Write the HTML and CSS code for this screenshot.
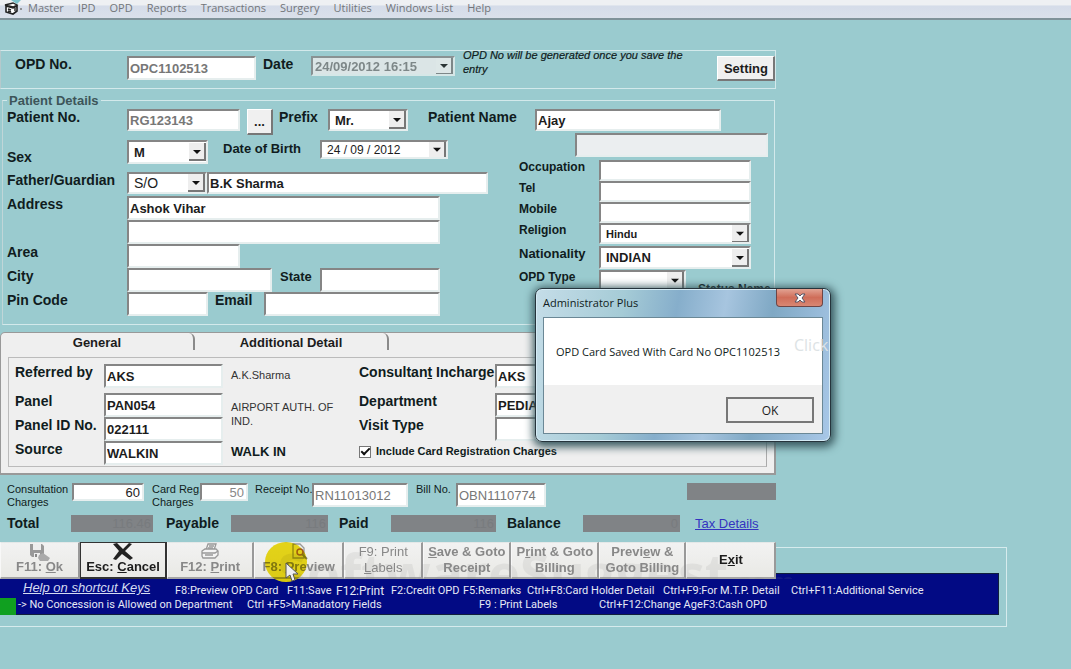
FILE: index.html
```html
<!DOCTYPE html>
<html lang="en">
<head>
    <meta charset="UTF-8">
    <meta name="viewport" content="width=device-width, initial-scale=1.0">
    <title>OPD Card</title>
    <link rel="stylesheet" href="styles.css">
</head>
<body>
    <nav class="menubar">
        <svg class="app-icon" width="18" height="16" viewBox="0 0 18 16">
            <path d="M7 0h10l-4 4z" fill="#7cc4cc"/>
            <path d="M1 5l8-2 4 2-4 2z" fill="#fff" stroke="#222" stroke-width="1.3"/>
            <path d="M2 6v6l7 2 4-3V6L9 8z" fill="#fff" stroke="#222" stroke-width="1.6"/>
            <path d="M4 9l3 1M4 11l3 1M11 8v3" fill="none" stroke="#222" stroke-width="1.4"/>
            <circle cx="17" cy="9" r="1" fill="#777"/>
        </svg>
        <a href="#">Master</a>
        <a href="#">IPD</a>
        <a href="#">OPD</a>
        <a href="#">Reports</a>
        <a href="#">Transactions</a>
        <a href="#">Surgery</a>
        <a href="#">Utilities</a>
        <a href="#">Windows List</a>
        <a href="#">Help</a>
    </nav>

    <form class="opd-form">
        <section class="card-head">
            <label for="opdNo">OPD No.</label>
            <input type="text" id="opdNo" class="muted" value="OPC1102513" readonly>
            <label for="opdDate">Date</label>
            <select id="opdDate" class="muted off" disabled><option>24/09/2012 16:15</option></select>
            <p class="note">OPD No will be generated once you save the entry</p>
            <button type="button" class="setting">Setting</button>
        </section>

        <fieldset class="patient">
            <legend>Patient Details</legend>
            <div class="row row-patient">
                <label for="patientNo">Patient No.</label>
                <input type="text" id="patientNo" class="muted" value="RG123143" readonly>
                <button type="button" class="browse">...</button>
                <label for="prefix">Prefix</label>
                <select id="prefix"><option>Mr.</option></select>
                <label for="patientName">Patient Name</label>
                <input type="text" id="patientName" value="Ajay">
            </div>
            <div class="columns">
                <div class="left">
                    <div class="row row-sex">
                        <label for="sex" class="low">Sex</label>
                        <select id="sex"><option>M</option></select>
                        <label for="dob" class="small">Date of Birth</label>
                        <select id="dob" class="dob"><option>24 / 09 / 2012</option></select>
                    </div>
                    <div class="row row-father">
                        <label for="guardian">Father/Guardian</label>
                        <select id="relation" aria-label="Relation"><option>S/O</option></select>
                        <input type="text" id="guardian" value="B.K Sharma">
                    </div>
                    <div class="row row-wide">
                        <label for="address1">Address</label>
                        <input type="text" id="address1" value="Ashok Vihar">
                    </div>
                    <div class="row row-wide">
                        <span></span>
                        <input type="text" id="address2" aria-label="Address line 2">
                    </div>
                    <div class="row row-area">
                        <label for="area">Area</label>
                        <input type="text" id="area">
                    </div>
                    <div class="row row-city">
                        <label for="city">City</label>
                        <input type="text" id="city">
                        <label for="state" class="small">State</label>
                        <input type="text" id="state">
                    </div>
                    <div class="row row-pin">
                        <label for="pin">Pin Code</label>
                        <input type="text" id="pin">
                        <label for="email">Email</label>
                        <input type="text" id="email">
                    </div>
                </div>
                <div class="right">
                    <input type="text" class="extra" aria-label="Patient remark" readonly>
                    <div class="side">
                        <label for="occupation">Occupation</label>
                        <input type="text" id="occupation">
                        <label for="tel">Tel</label>
                        <input type="text" id="tel">
                        <label for="mobile">Mobile</label>
                        <input type="text" id="mobile">
                        <label for="religion">Religion</label>
                        <select id="religion" class="tiny"><option>Hindu</option></select>
                        <label for="nationality" class="mid">Nationality</label>
                        <select id="nationality" class="tall"><option>INDIAN</option></select>
                        <label for="opdType">OPD Type</label>
                        <div class="type-row">
                            <select id="opdType"><option></option></select>
                            <span class="status">Status Name</span>
                        </div>
                    </div>
                </div>
            </div>
        </fieldset>

        <section class="tabs">
            <div class="tab-strip">
                <button type="button" class="tab">General</button>
                <button type="button" class="tab">Additional Detail</button>
            </div>
            <div class="tab-body">
                <div class="refs">
                    <label for="referredBy">Referred by</label>
                    <input type="text" id="referredBy" value="AKS">
                    <span class="desc">A.K.Sharma</span>
                    <label for="panel">Panel</label>
                    <input type="text" id="panel" value="PAN054">
                    <span class="desc desc-two">AIRPORT AUTH. OF IND.</span>
                    <label for="panelId">Panel ID No.</label>
                    <input type="text" id="panelId" value="022111">
                    <span></span>
                    <label for="source">Source</label>
                    <input type="text" id="source" value="WALKIN">
                    <span class="desc-strong">WALK IN</span>
                </div>
                <div class="consult">
                    <label for="consultant">Consultan<u>t</u> Incharge</label>
                    <input type="text" id="consultant" value="AKS">
                    <label for="department">Department</label>
                    <input type="text" id="department" value="PEDIATRICS">
                    <label for="visitType">Visit Type</label>
                    <input type="text" id="visitType">
                    <label class="check"><input type="checkbox" checked>Include Card Registration Charges</label>
                </div>
            </div>
        </section>

        <section class="charges">
            <label for="consultCharge">Consultation<br>Charges</label>
            <input type="text" id="consultCharge" class="num" value="60">
            <label for="cardCharge">Card Reg.<br>Charges</label>
            <input type="text" id="cardCharge" class="num dim" value="50">
            <label for="receiptNo">Receipt No.</label>
            <input type="text" id="receiptNo" class="muted" value="RN11013012" readonly>
            <label for="billNo">Bill No.</label>
            <input type="text" id="billNo" class="muted" value="OBN1110774" readonly>
            <output class="total-box blank"></output>
        </section>

        <section class="totals">
            <label for="total">Total</label>
            <output id="total" class="total-box">116.46</output>
            <label for="payable">Payable</label>
            <output id="payable" class="total-box">116</output>
            <label for="paid">Paid</label>
            <output id="paid" class="total-box">116</output>
            <label for="balance">Balance</label>
            <output id="balance" class="total-box">0</output>
            <a href="#" class="tax">Tax Details</a>
        </section>

        <div class="actions">
            <button type="button" class="icon-btn" disabled>
                <svg width="24" height="18" viewBox="0 0 24 18">
                    <path d="M2 1h12l2 2v11H4l-2-2z" fill="#999"/>
                    <path d="M5 1h8v6H5zM6 10h6v4H6z" fill="#eee"/>
                    <path d="M7 11h2v3H7z" fill="#888"/>
                    <path d="M11 12l4-2 7 5-2 3h-8l-2-3z" fill="#aaa"/>
                </svg>
                <span>F11: <u>O</u>k</span>
            </button>
            <button type="button" class="icon-btn active">
                <svg width="24" height="18" viewBox="0 0 24 18">
                    <path d="M2 1l4-1 6 6 6-6 3 1-7 7 8 7-3 2-8-6-6 6-3-1 6-8z" fill="#222"/>
                </svg>
                <span>Esc: <u>C</u>ancel</span>
            </button>
            <button type="button" class="icon-btn" disabled>
                <svg width="24" height="18" viewBox="0 0 24 18">
                    <g fill="#f4f4f4" stroke="#999" stroke-width="1.3">
                        <path d="M8 7l2-6h8l-2 6z"/>
                        <path d="M4 8l3-2h11l2 2v4l-3 3H5l-1-2z"/>
                        <path d="M4 10h13l3-2M7 12h8M11 3h5M10 5h5" fill="none"/>
                    </g>
                </svg>
                <span>F12: <u>P</u>rint</span>
            </button>
            <button type="button" class="icon-btn" disabled>
                <svg width="24" height="18" viewBox="0 0 24 18">
                    <path d="M6 1h7l4 4v10H6z" fill="#eee" stroke="#999" stroke-width="1.3"/>
                    <circle cx="13" cy="9" r="3" fill="none" stroke="#a67" stroke-width="1.5"/>
                    <path d="M15 11l5 5" stroke="#888" stroke-width="2"/>
                </svg>
                <span>F8: <u>P</u>review</span>
            </button>
            <button type="button" class="thin" disabled>F9: Print<br><u>L</u>abels</button>
            <button type="button" disabled><u>S</u>ave &amp; Goto<br>Receipt</button>
            <button type="button" disabled>P<u>r</u>int &amp; Goto<br>Billing</button>
            <button type="button" disabled>Previ<u>e</u>w &amp;<br>Goto Billing</button>
            <button type="button" class="exit">E<u>x</u>it</button>
            <span class="watermark">SoftwareSuggest<small>.com</small></span>
            <span class="spot"></span>
            <svg class="pointer" width="14" height="20" viewBox="0 0 14 20">
                <path d="M1 1v15l4-3 2 6 3-1-2-6h5z" fill="#eee" stroke="#555"/>
            </svg>
        </div>
    </form>

    <footer class="help-frame">
        <div class="help">
            <div class="keys keys-top">
                <a href="#" class="help-link">Help on shortcut Keys</a>
                <span>F8:Preview OPD Card</span>
                <span>F11:Save</span>
                <span class="big">F12:Print</span>
                <span>F2:Credit OPD</span>
                <span>F5:Remarks</span>
                <span>Ctrl+F8:Card Holder Detail</span>
                <span>Ctrl+F9:For M.T.P. Detail</span>
                <span>Ctrl+F11:Additional Service</span>
            </div>
            <div class="keys keys-bottom">
                <i class="green"></i>
                <span>-&gt; No Concession is Allowed on Department</span>
                <span>Ctrl +F5&gt;Manadatory Fields</span>
                <span>F9 : Print Labels</span>
                <span>Ctrl+F12:Change Age</span>
                <span>F3:Cash OPD</span>
            </div>
        </div>
    </footer>

    <div class="dialog" role="dialog" aria-labelledby="dialogTitle">
        <div class="dialog-bar">
            <span id="dialogTitle">Administrator Plus</span>
            <button type="button" class="close" aria-label="Close">
                <svg width="12" height="10" viewBox="0 0 12 10">
                    <path d="M1 1h3l2 2 2-2h3L8 5l3 4H8L6 7 4 9H1l3-4z" fill="#fff" stroke="#556" stroke-width="1"/>
                </svg>
            </button>
        </div>
        <div class="dialog-body">
            <p>OPD Card Saved With Card No OPC1102513</p>
            <span class="hint">Click</span>
        </div>
        <div class="dialog-foot">
            <button type="button">OK</button>
        </div>
    </div>
</body>
</html>
```
FILE: styles.css
```css
* { box-sizing: border-box; }
body { margin: 0; min-height: 100vh; background-color: #9acbcf; font-family: "Liberation Sans", Arial, sans-serif; font-size: 13px; color: #101c20; overflow-x: hidden; }
input, select, button { font-family: inherit; font-size: 13px; font-weight: bold; color: #1c1c1c; margin: 0; border-radius: 0; }

/* menu */
.menubar { display: flex; align-items: center; gap: 14px; height: 20px; padding: 0 4px 3px; background: linear-gradient(#eef0f3 25%, #d5dce9 35%, #dae0ea); border-bottom: 2px solid #7f9299; }
.menubar a { color: #73767a; text-decoration: none; font-family: "Open Sans", sans-serif; font-size: 11px; line-height: 15px; }
.app-icon { margin-right: -8px; }

/* controls */
input[type="text"], select { height: 22px; width: 100%; min-width: 0; padding: 0 1px; background-color: #fff; border: 2px solid; border-color: #858585 #e6eeee #e6eeee #858585; outline: none; }
select { appearance: none; padding: 0 5px; background-repeat: no-repeat; background-position: right center; background-size: 17px 18px; background-image: url("data:image/svg+xml,%3Csvg xmlns='http://www.w3.org/2000/svg' viewBox='0 0 17 18' preserveAspectRatio='none'%3E%3Crect width='17' height='18' fill='%23eee'/%3E%3Cpath d='M16 0v17H0' fill='none' stroke='%23777' stroke-width='2'/%3E%3Cpath d='M4 7h8l-4 4z' fill='%23111'/%3E%3C/svg%3E"); }
input.muted, select.muted { color: #777; }
input.num { text-align: right; padding: 0 2px; height: 18px; font-weight: normal; }
input.dim { color: #888; }
select.off { background-color: #ececec; padding: 0 2px; opacity: 0.8; }
button { background: #f0f0f0; border: 1px solid; border-color: #fff #777 #777 #fff; padding: 0; }
label { font-size: 14px; font-weight: bold; line-height: 17px; white-space: nowrap; }
label.small { font-size: 13px; }

.opd-form { width: 72.5%; min-width: 776px; padding-top: 30px; }

/* card number line */
.card-head { display: grid; grid-template-columns: 112px 129px 7px 48px 144px 8px 230px 1fr 58px; align-items: start; height: 39px; padding: 5px 0 0 14px; border: 1px solid #d3e9eb; border-left-color: #b5c9cc; }
.card-head label { grid-column: 1; }
.card-head label + input + label { grid-column: 4; }
.card-head input { height: 24px; }
.card-head select { grid-column: 5; height: 20px; }
.note { grid-column: 7; margin: -8px 0 0; font-size: 11px; font-style: italic; line-height: 14px; -webkit-text-stroke: 0.2px; }
.setting { grid-column: 9; height: 25px; border-width: 1px 2px 2px 1px; }

/* patient details */
.patient { margin: 4px 1px 0 2px; padding: 1px 0 8px 4px; border: 1px solid #d3e9eb; border-left-color: #c0d6d8; min-width: 0; }
.patient legend { padding: 0 2px; color: #3d5559; font-size: 13px; font-weight: bold; line-height: 15px; }
.row { display: grid; height: 24px; align-items: start; }
.row-patient { grid-template-columns: 120px 113px 7px 26px 6px 49px 80px 20px 107px 186px; height: 25px; }
.browse { grid-column: 4; height: 26px; border-width: 1px 2px 2px 1px; }
.browse + label { grid-column: 6; }
.row-patient label:nth-of-type(3) { grid-column: 9; }
.columns { display: grid; grid-template-columns: 512px 1fr; }
.left { padding-top: 6px; }
.row-sex { grid-template-columns: 120px 81px 15px 97px 128px; height: 32px; }
.row-sex .small { grid-column: 4; }
.row-sex .low { align-self: center; padding-top: 2px; }
.row-sex .dob { height: 19px; font-weight: normal; font-size: 12px; }
.row-father { grid-template-columns: 120px 80px 281px; }
.row-father select { font-weight: normal; font-size: 14px; }
.row-wide { grid-template-columns: 120px 313px; }
.row-area { grid-template-columns: 120px 113px; }
.row-city { grid-template-columns: 120px 145px 8px 40px 120px; }
.row-city .small { grid-column: 4; }
.row-pin { grid-template-columns: 120px 81px 7px 49px 176px; }
.row-pin label:nth-of-type(2) { grid-column: 4; }
.left .row input, .row-sex #sex { height: 24px; }
.left .row-father input { height: 22px; }
.right .extra { display: block; width: 193px; height: 24px; margin: -1px 0 0 56px; background-color: #ebeef0; }
.side { display: grid; grid-template-columns: 80px 152px; align-items: start; margin-top: 3px; }
.side input, .side select { height: 21px; }
.side label { font-size: 12px; line-height: 15px; }
.side label.mid { font-size: 13px; }
.side .tiny { font-size: 11px; margin-bottom: 2px; }
.side .tall { height: 23px; margin-bottom: 1px; }
.type-row { display: flex; gap: 12px; height: 21px; }
.type-row select { width: 87px; flex: none; }
.status { font-size: 12px; font-weight: bold; line-height: 14px; padding-top: 12px; white-space: nowrap; }

/* tabs */
.tabs { margin-top: 7px; padding: 0 7px 6px; background-color: #efefef; border: 1px solid #999; border-width: 1px 2px 2px 1px; border-radius: 5px 0 0 0; }
.tab-strip { display: flex; margin-left: -7px; height: 24px; }
.tab { width: 194px; height: 17px; background: none; border: 0; border-right: 2px solid #8a8a8a; border-top-right-radius: 6px; line-height: 19px; }
.tab-body { display: grid; grid-template-columns: 344px 1fr; padding: 6px 6px 1px; border: 1px solid #bbb; border-right-color: #aaa; }
.refs { display: grid; grid-template-columns: 89px 119px 8px 112px; grid-template-rows: 29px 24px 24px 24px; align-items: start; }
.refs label { grid-column: 1; }
.refs span { grid-column: 4; }
.refs input, .consult input[type="text"] { height: 24px; }
.desc { font-size: 11px; line-height: 14px; padding-top: 4px; color: #333; }
.desc-two { padding-top: 7px; }
.desc-strong { font-size: 13px; font-weight: bold; line-height: 22px; }
.consult { display: grid; grid-template-columns: 136px 200px; grid-template-rows: 29px 24px 24px 24px; align-items: start; }
.check { grid-column: 1 / 3; display: flex; align-items: center; gap: 5px; font-size: 11px; line-height: 21px; }
.check input { appearance: none; width: 12px; height: 12px; margin: 0; background: #fff; border: 1px solid #777; display: grid; place-items: center; }
.check input:checked::after { content: ""; width: 7px; height: 3px; margin-bottom: 3px; border: solid #111; border-width: 0 0 2px 2px; transform: rotate(-45deg); }

/* charges and totals */
.charges { display: grid; grid-template-columns: 65px 72px 8px 48px 48px 7px 57px 96px 8px 40px 90px 1fr 89px; align-items: start; height: 32px; margin-top: 8px; padding-left: 7px; }
.charges label { font-size: 11px; font-weight: normal; line-height: 13px; }
.charges label:nth-of-type(2) { grid-column: 4; }
.charges label:nth-of-type(3) { grid-column: 7; }
.charges label:nth-of-type(4) { grid-column: 10; }
.charges input.muted { height: 24px; }
.charges #receiptNo, .charges #billNo { font-weight: normal; }
.charges .blank { grid-column: 13; }
.total-box { height: 17px; padding-right: 2px; background-color: #808386; color: #787b7e; text-align: right; line-height: 17px; overflow: hidden; }
.totals { display: grid; grid-template-columns: 64px 82px 13px 65px 97px 11px 52px 105px 11px 76px 97px 15px 1fr; height: 27px; padding-left: 7px; }
.totals label:nth-of-type(2) { grid-column: 4; }
.totals label:nth-of-type(3) { grid-column: 7; }
.totals label:nth-of-type(4) { grid-column: 10; }
.tax { grid-column: 13; color: #3434c0; line-height: 17px; }

/* action buttons */
.actions { position: relative; z-index: 1; display: grid; grid-template-columns: 80fr 87fr 87fr 90fr 79fr 88fr 88fr 87fr 90fr; height: 37px; }
.actions button { border-width: 1px 2px 2px 1px; border-color: #e4e8e8 #999 #a5a5a5 #f8f8f8; line-height: 16px; white-space: nowrap; background: linear-gradient(#f2f2f2, #e9e9e5); }
.actions button:disabled { color: #888; }
.actions .thin { font-weight: normal; }
.actions .icon-btn { display: flex; flex-direction: column; align-items: center; }
.actions .icon-btn svg { flex: none; margin-bottom: -2px; }
.actions button.active { border-color: #333; }
.watermark { position: absolute; left: 277px; top: 0; height: 37px; overflow: hidden; font: bold 54px/60px "Open Sans", sans-serif; color: #888; opacity: 0.12; pointer-events: none; white-space: nowrap; }
.watermark small { font-size: 28px; }
.spot { position: absolute; left: 265px; top: 0; width: 42px; height: 40px; border-radius: 50%; background-color: #f0dc00; opacity: 0.9; mix-blend-mode: multiply; }
.pointer { position: absolute; left: 285px; top: 20px; }

/* shortcut help */
.help-frame { width: 94%; min-width: 1000px; margin-top: -32px; padding: 25px 7px 11px 0; border: 1px solid #d6ebed; border-left: 0; }
.help { height: 42px; padding-top: 7px; background-color: #020a84; border: 1px solid #10203c; border-left: 0; color: #e6e9f5; font-family: Roboto, sans-serif; font-size: 11px; }
.keys { display: grid; white-space: nowrap; line-height: 14px; }
.keys-top { grid-template-columns: 152px 112px 49px 55px 72px 64px 136px 128px 1fr; padding-left: 23px; height: 17px; align-items: end; }
.keys .big { font-size: 12px; }
.help-link { align-self: start; color: #d5dcf2; font-family: "Liberation Sans", Arial, sans-serif; font-size: 13px; font-style: italic; line-height: 13px; }
.keys-bottom { grid-template-columns: 18px 229px 232px 120px 104px 1fr; }
.green { width: 16px; height: 17px; background-color: #10a020; }

/* message box */
.dialog { position: absolute; z-index: 2; left: 535px; top: 288px; width: 296px; padding: 0 7px 7px; border: 1px solid #26343c; border-radius: 7px; background: linear-gradient(100deg, #c5dde8, #a5cbd6 28%, #86aecb 45%, #a7c5df 60%, #7fa8c4 75%, #a9c8e8); box-shadow: inset 0 0 0 1px #d5ebf5, 1px 2px 9px 3px #3a5a60; font-family: "Open Sans", sans-serif; }
.dialog-bar { display: flex; align-items: flex-start; justify-content: space-between; height: 28px; font-size: 11px; line-height: 27px; }
.close { display: grid; place-items: center; width: 47px; height: 18px; border: 1px solid #6d4545; border-top: 0; border-radius: 0 0 4px 4px; background: linear-gradient(#e2a393, #cf6d59 50%, #d88773); }
.dialog-body { position: relative; display: flex; align-items: center; height: 68px; padding: 0 12px; background-color: #fff; border: 1px solid #6b8896; border-bottom: 0; }
.dialog-body p { margin: 0; font-size: 11px; white-space: nowrap; }
.hint { position: absolute; left: 250px; top: 16px; color: #dde3e5; font-size: 16px; }
.dialog-foot { display: flex; justify-content: flex-end; height: 49px; padding: 12px 8px; background-color: #f0f0f0; border: 1px solid #6b8896; border-top: 0; }
.dialog-foot button { width: 88px; height: 26px; border: 2px solid #777; background: #f0f0f0; font-family: inherit; font-size: 12px; font-weight: normal; }
```
